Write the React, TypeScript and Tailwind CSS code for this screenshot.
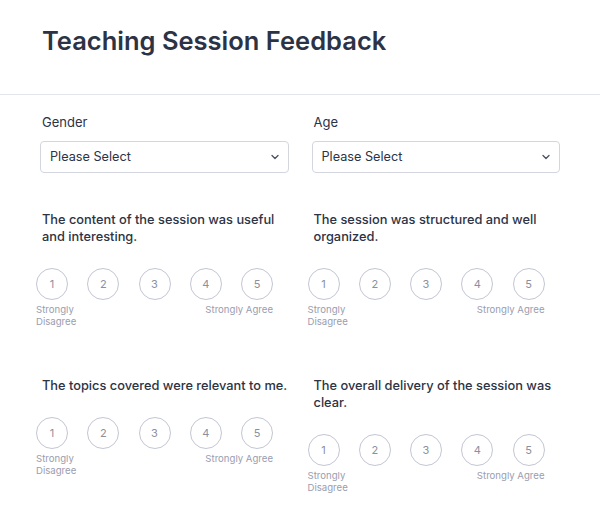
import { ChevronDown } from "lucide-react";

const questions = [
  "The content of the session was useful and interesting.",
  "The session was structured and well organized.",
  "The topics covered were relevant to me.",
  "The overall delivery of the session was clear.",
];

function SelectField({ label }: { label: string }) {
  return (
    <div className="flex flex-col">
      <label className="ml-[2px] mb-[9px] text-[13px] leading-[20px] text-[#2c3345]">{label}</label>
      <div className="flex h-[32px] items-center justify-between rounded-[4px] border border-[#d3d6df] pl-[9px] pr-[7px] text-[12.7px] text-[#2c3345]">
        <span>Please Select</span>
        <ChevronDown size={12} strokeWidth={2.5} className="text-[#4a4f60]" aria-hidden />
      </div>
    </div>
  );
}

function Scale({ question }: { question: string }) {
  return (
    <div className="flex flex-col">
      <p className="ml-[2px] text-[12.8px] font-medium leading-[17px] text-[#2c3345]">{question}</p>
      <div className="-ml-[4px] mt-[23px] w-[237px]">
        <div className="flex justify-between">
          {[1, 2, 3, 4, 5].map((n) => (
            <span
              key={n}
              className="flex h-[32px] w-[32px] items-center justify-center rounded-full border border-[#c3c6d4] text-[11px] text-[#8b8fa0]"
            >
              {n}
            </span>
          ))}
        </div>
        <div className="mt-[4px] flex items-start justify-between text-[9.6px] leading-[12px] text-[#9a9db0]">
          <span className="w-[50px]">Strongly Disagree</span>
          <span className="whitespace-nowrap">Strongly Agree</span>
        </div>
      </div>
    </div>
  );
}

export default function App() {
  return (
    <div className="min-h-[514px] bg-white" style={{ fontFamily: "Inter, 'Noto Sans', sans-serif" }}>
      <header className="h-[95px] border-b border-[#e3e5ea] px-[42px] pt-[24px]">
        <h1 className="text-[25.5px] font-semibold leading-[34px] text-[#2c3345]">Teaching Session Feedback</h1>
      </header>
      <div className="grid grid-cols-2 gap-x-[23px] px-10 pt-[17px]">
        <SelectField label="Gender" />
        <SelectField label="Age" />
      </div>
      <div className="grid grid-cols-2 gap-x-[23px] gap-y-[49px] px-10 pt-[38px]">
        {questions.map((q) => (
          <Scale key={q} question={q} />
        ))}
      </div>
    </div>
  );
}
